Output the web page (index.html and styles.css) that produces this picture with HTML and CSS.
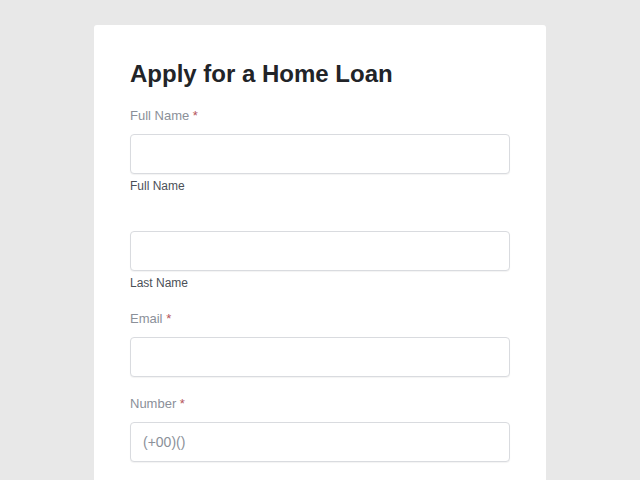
FILE: index.html
```html
<!DOCTYPE html>
<html lang="en">
<head>
<meta charset="utf-8">
<title>Apply for a Home Loan</title>
<link rel="stylesheet" href="styles.css">
</head>
<body>
  <main class="card">
    <h1 class="title">Apply for a Home Loan</h1>

    <div class="field field-name">
      <label class="label" for="first">Full Name <span class="req">*</span></label>
      <input class="input" id="first" type="text">
      <div class="sublabel">Full Name</div>
      <input class="input input-second" id="last" type="text">
      <div class="sublabel">Last Name</div>
    </div>

    <div class="field">
      <label class="label" for="email">Email <span class="req">*</span></label>
      <input class="input" id="email" type="email">
    </div>

    <div class="field">
      <label class="label" for="number">Number <span class="req">*</span></label>
      <input class="input" id="number" type="tel" placeholder="(+00)()">
    </div>
  </main>
</body>
</html>
```

FILE: styles.css
```css
html, body {
  margin: 0;
  padding: 0;
}

body {
  background: #e8e8e8;
  font-family: "Liberation Sans", Arial, sans-serif;
}

.card {
  box-sizing: border-box;
  width: 452px;
  margin: 25px auto 0;
  padding: 36px 36px 40px;
  background: #ffffff;
  border-radius: 3px;
  min-height: 480px;
}

.title {
  margin: 0 0 21px;
  font-size: 24px;
  line-height: 26px;
  font-weight: 700;
  color: #222428;
}

.field {
  display: flex;
  flex-direction: column;
  margin-bottom: 19px;
}

.field-name {
  margin-bottom: 21px;
}

.label {
  display: block;
  font-size: 13px;
  line-height: 16px;
  color: #8b9099;
  margin-bottom: 10px;
}

.req {
  color: #b5535a;
}

.input {
  box-sizing: border-box;
  display: block;
  width: 380px;
  height: 40px;
  margin: 0;
  padding: 0 12px;
  border: 1px solid #d9dbdf;
  border-radius: 4px;
  box-shadow: 0 1px 1px rgba(0, 0, 0, 0.05);
  background: #ffffff;
  font-family: "Liberation Sans", Arial, sans-serif;
  font-size: 14px;
  color: #333;
  outline: none;
}

.input::placeholder {
  color: #8b9099;
}

.input-second {
  margin-top: 38px;
}

.sublabel {
  margin-top: 5px;
  font-size: 12px;
  line-height: 14px;
  color: #4b5057;
}
```
